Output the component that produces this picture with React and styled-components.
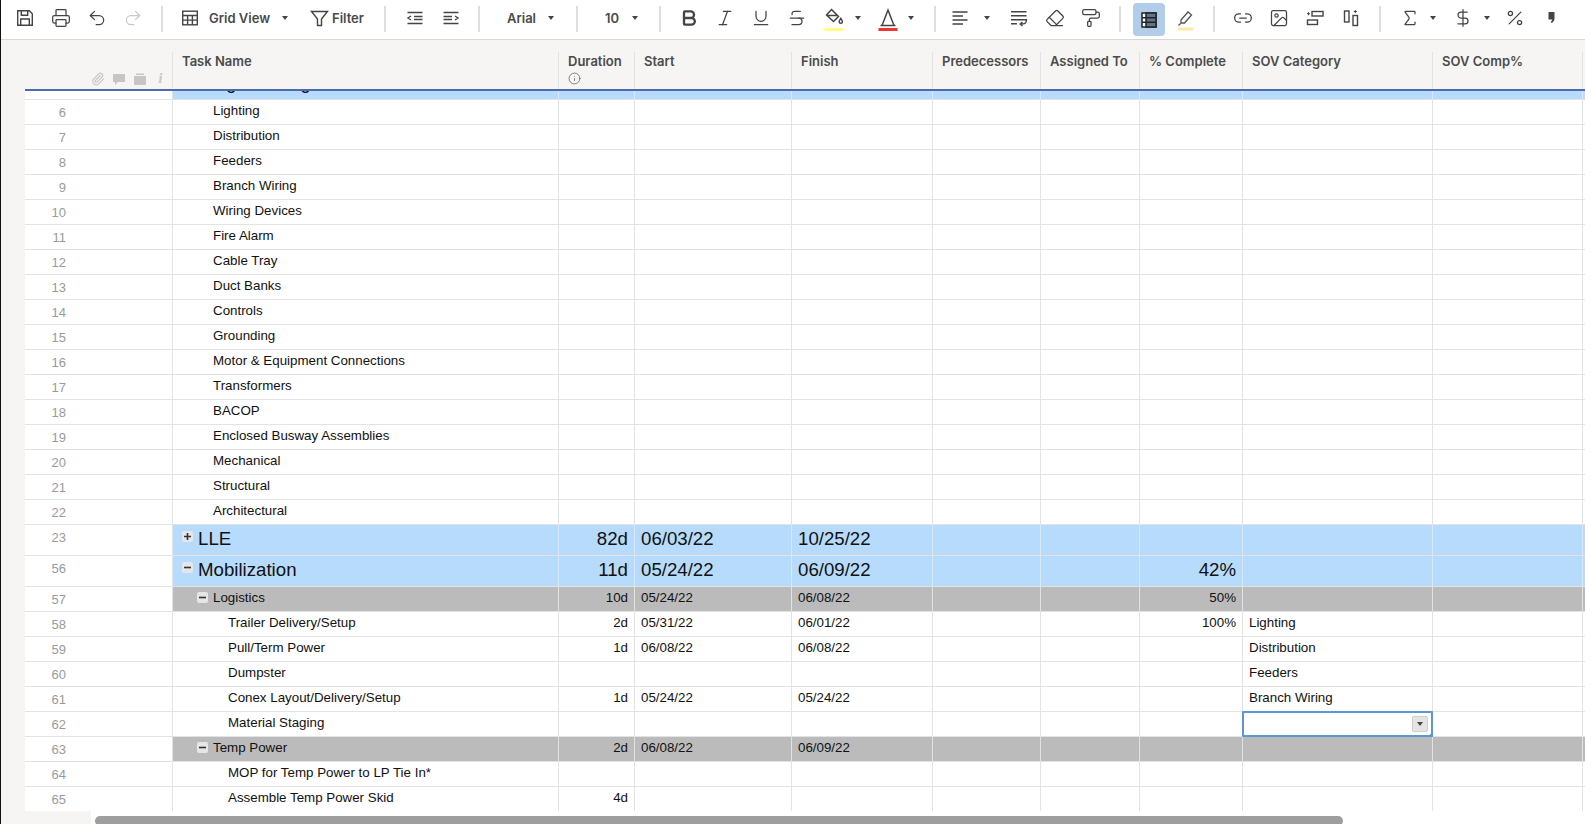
import React from 'react'
import styled, { createGlobalStyle } from 'styled-components'
import {
    Printer, Undo2, Redo2, Bold, Italic, Underline, Strikethrough, Eraser, PaintRoller,
    Link2, Image as ImageIcon, Sigma, DollarSign, Percent, Paperclip, Info
} from 'lucide-react'

const COLUMNS = '148px 386px 76px 157px 141px 108px 99px 103px 190px 150px 1fr'
const UI_FONT = '"Inter", "Liberation Sans", sans-serif'
const CELL_FONT = '"Liberation Sans", Arial, sans-serif'

const GlobalStyle = createGlobalStyle`
html, body {
    margin: 0;
    height: 100%;
    overflow: hidden;
    background: #fff;
}
`

const Page = styled.div`
width: 1585px;
height: 824px;
box-sizing: border-box;
border-left: 1px solid #111;
display: flex;
flex-direction: column;
overflow: hidden;
font-family: ${CELL_FONT};
`

const Toolbar = styled.div`
flex: none;
height: 40px;
box-sizing: border-box;
border-bottom: 1px solid #d8d8d8;
padding: 0 0 3px 6px;
display: flex;
align-items: center;
color: #444;
background: #fff;
overflow: hidden;
`

const ToolButton = styled.div`
flex: none;
width: ${p => p.$w || 36}px;
height: 33px;
margin-right: ${p => p.$r || 0}px;
display: flex;
align-items: center;
justify-content: center;
color: ${p => p.$muted ? '#c9c9c9' : '#444'};
svg { display: block; }
`

const ActiveButton = styled(ToolButton)`
background: #b2cde9;
border-radius: 4px;
margin-top: 3px;
`

const Separator = styled.div`
flex: none;
width: 2px;
height: 26px;
background: #dedede;
margin: 2px ${p => p.$r ?? 10}px 0 ${p => p.$l ?? 10}px;
`

const ToolLabel = styled.div`
flex: none;
width: ${p => p.$w}px;
padding-left: ${p => p.$pl || 0}px;
box-sizing: border-box;
font: 600 13px ${UI_FONT};
color: #4a4a4a;
white-space: nowrap;
`

const Caret = styled.div`
flex: none;
width: ${p => p.$w}px;
margin-right: ${p => p.$r || 0}px;
display: flex;
justify-content: center;
&::after {
    content: '';
    border-left: 3.5px solid transparent;
    border-right: 3.5px solid transparent;
    border-top: 4px solid #444;
}
`

const FilterButton = styled.div`
flex: none;
width: 74px;
box-sizing: border-box;
padding-left: 10px;
display: flex;
align-items: center;
gap: 2px;
`

const Sheet = styled.div`
flex: 1;
min-height: 0;
display: flex;
flex-direction: column;
background: #f6f5f3;
padding-left: 24px;
`

const HeaderRow = styled.div`
flex: none;
height: 51px;
box-sizing: border-box;
padding-top: 12px;
border-bottom: 2px solid #4d6cab;
display: grid;
grid-template-columns: ${COLUMNS};
`

const HeaderCell = styled.div`
border-right: 1px solid #e2e2e2;
padding: 0 0 0 9px;
font: 600 13px/18px ${UI_FONT};
color: #4b4b4b;
white-space: nowrap;
overflow: hidden;
svg { display: block; margin-top: 2px; color: #666; }
`

const GutterHead = styled.div`
border-right: 1px solid #e2e2e2;
padding: 18px 5px 0 0;
display: flex;
justify-content: flex-end;
align-items: center;
gap: 7px;
height: 18px;
color: #c6c6c6;
`

const InfoMark = styled.span`
font: italic 700 14px "Liberation Serif", serif;
color: #c6c6c6;
width: 13px;
text-align: center;
`

const Body = styled.div`
height: 720px;
flex: none;
overflow: hidden;
background: #fff;
`

const ROW_BG = { section: '#b7dbfd', group: '#bbbbbb', leaf: '#fff' }

const Row = styled.div`
display: grid;
grid-template-columns: ${COLUMNS};
height: ${p => p.$kind === 'section' ? 31 : 25}px;
margin-top: ${p => p.$clip ? -22 : 0}px;
box-sizing: border-box;
`

const NumberCell = styled.div`
background: #fff;
border-right: 1px solid #e3e3e3;
border-bottom: 1px solid #e3e3e3;
box-sizing: border-box;
padding: 5px 106px 0 0;
text-align: right;
font-size: 13px;
line-height: 16px;
color: #9a9a9a;
`

const Cell = styled.div`
position: relative;
box-sizing: border-box;
background: ${p => ROW_BG[p.$kind]};
border-right: 1px solid ${p => p.$kind === 'section' ? '#d9e8f6' : p.$kind === 'group' ? '#e2e2e2' : '#e3e3e3'};
border-bottom: 1px solid #e3e3e3;
padding: 0 6px;
text-align: ${p => p.$right ? 'right' : 'left'};
font-size: ${p => p.$kind === 'section' ? '18.67px' : '13.33px'};
line-height: ${p => p.$kind === 'section' ? '27px' : '21px'};
color: #111;
white-space: nowrap;
`

const TaskCell = styled(Cell)`
display: flex;
padding-left: ${p => p.$indent}px;
`

const Expander = styled.span`
flex: none;
width: 11px;
height: 11px;
margin: ${p => p.$big ? '6px' : '5px'} 5px 0 0;
border-radius: 2px;
background: #e6e6e6;
display: flex;
align-items: center;
justify-content: center;
svg { display: block; }
`

const Selection = styled.div`
position: absolute;
inset: -1px -1px -1px -1px;
border: 2px solid #5b96d6;
border-radius: 1px;
box-sizing: border-box;
display: flex;
align-items: center;
justify-content: flex-end;
padding-right: 3px;
&::after {
    content: '';
    position: absolute;
    right: -3px;
    bottom: -3px;
    width: 4px;
    height: 4px;
    background: #5b96d6;
}
`

const DropButton = styled.div`
width: 16px;
height: 16px;
box-sizing: border-box;
border: 1px solid #cfcfcf;
border-radius: 2px;
background: #e4e4e4;
display: flex;
align-items: center;
justify-content: center;
&::after {
    content: '';
    border-left: 3.5px solid transparent;
    border-right: 3.5px solid transparent;
    border-top: 4px solid #444;
}
`

const Footer = styled.div`
flex: 1;
min-height: 0;
display: flex;
background: #fff;
margin-left: -24px;
`

const FooterBlank = styled.div`
flex: none;
width: 90px;
background: #f6f5f3;
`

const ScrollTrack = styled.div`
flex: 1;
padding: 5px 0 0 4px;
`

const ScrollThumb = styled.div`
width: 1248px;
height: 10px;
background: #9e9e9e;
border-radius: 5px;
`

const Glyph = ({ children, size = 20, vb = 20 }) => (
    <svg width={size} height={size} viewBox={`0 0 ${vb} ${vb}`} fill='none' stroke='currentColor' strokeWidth='1.4'>
        {children}
    </svg>
)

const lucide = { size: 20, strokeWidth: 1.5 }

const SaveIcon = () => (
    <Glyph>
        <path d='M2.700 2.700h11.600l3 3v11.600H2.700z' />
        <path d='M6.300 2.700v4.600h6.400V2.700M5.700 17.300v-6.300h8.600v6.300' />
    </Glyph>
)

const GridViewIcon = () => (
    <Glyph>
        <rect x='2.700' y='3.200' width='14.600' height='13.600' />
        <path d='M2.700 7.500h14.600M2.700 12.100h14.600M7.600 7.500v9.300M12.400 7.500v9.300' />
    </Glyph>
)

const FunnelIcon = () => (
    <Glyph>
        <path d='M1.500 3.500h16l-6 7.500v6.500h-4V11z' />
    </Glyph>
)

const OutdentIcon = () => (
    <Glyph>
        <path d='M2.500 4.500h15M9 8.500h8.500M9 11.500h8.500M2.500 15.500h15M6 8l-3 2 3 2' />
    </Glyph>
)

const IndentIcon = () => (
    <Glyph>
        <path d='M2.500 4.500h15M2.500 8.500h8.500M2.500 11.500h8.500M2.500 15.500h15M14 8l3 2-3 2' />
    </Glyph>
)

const AlignIcon = () => (
    <Glyph>
        <path d='M2.500 4h15M2.500 8h10.500M2.500 12h15M2.500 16h10.500' />
    </Glyph>
)

const WrapIcon = () => (
    <Glyph>
        <path d='M2 3.700h15.500M2 7.700h15.500M2 11.700h15.500c0 4-2 4.300-6 4.300M13.500 14l-2.300 2 2.300 2M2 15.700h6' />
    </Glyph>
)

const FillIcon = () => (
    <svg width='20' height='26' viewBox='0 0 20 26' fill='none' stroke='currentColor' strokeWidth='1.500'>
        <path d='M7.500 4.500l7 7-5 5-7-6.500zM3 10.500h11' />
        <path d='M16.800 13.500c1 1.600 1.600 2.400 1.600 3.200a1.600 1.600 0 0 1-3.200 0c0-.8.600-1.600 1.600-3.200z' />
        <rect x='0.500' y='23' width='19' height='3' fill='#ffff80' stroke='none' />
    </svg>
)

const TextColorIcon = () => (
    <svg width='20' height='26' viewBox='0 0 20 26' fill='none' stroke='currentColor' strokeWidth='1.500'>
        <path d='M4 20.500L10 5l6 15.500M2.500 20.500h15' />
        <rect x='0.500' y='23' width='19' height='3' fill='#ee3333' stroke='none' />
    </svg>
)

const CardsIcon = () => (
    <svg width='16' height='16' viewBox='0 0 16 16' fill='#5e7488' stroke='#222' strokeWidth='1.500'>
        <rect x='1' y='1' width='14' height='14' fill='#fff' />
        <rect x='5' y='1' width='10' height='14' />
        <path d='M1 5.700h14M1 10.300h14' />
    </svg>
)

const HighlightIcon = () => (
    <svg width='20' height='26' viewBox='0 0 20 26' fill='none' stroke='#555' strokeWidth='1.300'>
        <path d='M6 15l7-8 3.500 3-7 8H6zM5.500 18.500l-2 2' />
        <rect x='3' y='22.500' width='15' height='3' fill='#fbe9a8' stroke='none' />
    </svg>
)

const RowsIcon = () => (
    <Glyph>
        <rect x='7' y='3.500' width='11' height='4.500' />
        <rect x='2.500' y='12' width='10' height='4.500' />
        <path d='M2 5.700h3M3.500 4.200v3' strokeWidth='1' />
    </Glyph>
)

const ColumnsIcon = () => (
    <Glyph>
        <rect x='3.500' y='3' width='4.500' height='11' />
        <rect x='12' y='7.500' width='4.500' height='10' />
        <path d='M12.800 3.500h3M14.300 2v3' strokeWidth='1' />
    </Glyph>
)

const CommaIcon = () => (
    <svg width='10' height='16' viewBox='0 0 10 16'>
        <path d='M1.500 2h6v6c0 2.500-1 4-3 5l-.8-1.200c1-.6 1.400-1.400 1.500-2.300H1.500z' fill='#444' />
    </svg>
)

const CommentIcon = () => (
    <svg width='14' height='14' viewBox='0 0 14 14' fill='currentColor'>
        <path d='M1 2h12v8H6l-3 3v-3H1z' />
    </svg>
)

const BriefcaseIcon = () => (
    <svg width='14' height='14' viewBox='0 0 14 14' fill='currentColor'>
        <rect x='1' y='4' width='12' height='9' rx='1' />
        <rect x='3' y='1.500' width='8' height='1.500' />
    </svg>
)

const ExpandMark = ({ open }) => (
    <svg width='7' height='7' viewBox='0 0 7 7' stroke='#333' strokeWidth='1.600'>
        <path d={open ? 'M0 3.500h7' : 'M0 3.500h7M3.500 0v7'} />
    </svg>
)

const HEADERS = ['Task Name', 'Duration', 'Start', 'Finish', 'Predecessors', 'Assigned To', '% Complete', 'SOV Category', 'SOV Comp%', '']

const LEAVES = [
    [6, 'Lighting'], [7, 'Distribution'], [8, 'Feeders'], [9, 'Branch Wiring'], [10, 'Wiring Devices'],
    [11, 'Fire Alarm'], [12, 'Cable Tray'], [13, 'Duct Banks'], [14, 'Controls'], [15, 'Grounding'],
    [16, 'Motor & Equipment Connections'], [17, 'Transformers'], [18, 'BACOP'],
    [19, 'Enclosed Busway Assemblies'], [20, 'Mechanical'], [21, 'Structural'], [22, 'Architectural']
]

const ROWS = [
    { num: 5, kind: 'section', name: 'Stage Testing', clip: true, open: null },
    ...LEAVES.map(([num, name]) => ({ num, kind: 'leaf', name, indent: 40 })),
    { num: 23, kind: 'section', name: 'LLE', open: false, duration: '82d', start: '06/03/22', finish: '10/25/22' },
    { num: 56, kind: 'section', name: 'Mobilization', open: true, duration: '11d', start: '05/24/22', finish: '06/09/22', complete: '42%' },
    { num: 57, kind: 'group', name: 'Logistics', open: true, duration: '10d', start: '05/24/22', finish: '06/08/22', complete: '50%' },
    { num: 58, kind: 'leaf', name: 'Trailer Delivery/Setup', indent: 55, duration: '2d', start: '05/31/22', finish: '06/01/22', complete: '100%', sov: 'Lighting' },
    { num: 59, kind: 'leaf', name: 'Pull/Term Power', indent: 55, duration: '1d', start: '06/08/22', finish: '06/08/22', sov: 'Distribution' },
    { num: 60, kind: 'leaf', name: 'Dumpster', indent: 55, sov: 'Feeders' },
    { num: 61, kind: 'leaf', name: 'Conex Layout/Delivery/Setup', indent: 55, duration: '1d', start: '05/24/22', finish: '05/24/22', sov: 'Branch Wiring' },
    { num: 62, kind: 'leaf', name: 'Material Staging', indent: 55, selected: true },
    { num: 63, kind: 'group', name: 'Temp Power', open: true, duration: '2d', start: '06/08/22', finish: '06/09/22' },
    { num: 64, kind: 'leaf', name: 'MOP for Temp Power to LP Tie In*', indent: 55 },
    { num: 65, kind: 'leaf', name: 'Assemble Temp Power Skid', indent: 55, duration: '4d' }
]

const SheetRow = ({ row }) => {
    const { kind, open } = row
    const hasToggle = typeof open === 'boolean'
    const indent = row.indent ?? (kind === 'group' ? 24 : hasToggle ? 9 : 25)
    return (
        <Row $kind={kind} $clip={row.clip}>
            <NumberCell>{row.clip ? '' : row.num}</NumberCell>
            <TaskCell $kind={kind} $indent={indent}>
                {hasToggle && <Expander $big={kind === 'section'}><ExpandMark open={open} /></Expander>}
                {row.name}
            </TaskCell>
            <Cell $kind={kind} $right>{row.duration}</Cell>
            <Cell $kind={kind}>{row.start}</Cell>
            <Cell $kind={kind}>{row.finish}</Cell>
            <Cell $kind={kind} />
            <Cell $kind={kind} />
            <Cell $kind={kind} $right>{row.complete}</Cell>
            <Cell $kind={kind}>
                {row.sov}
                {row.selected && <Selection><DropButton /></Selection>}
            </Cell>
            <Cell $kind={kind} />
            <Cell $kind={kind} />
        </Row>
    )
}

const App = () => (
    <Page>
        <GlobalStyle />
        <Toolbar>
            <ToolButton><SaveIcon /></ToolButton>
            <ToolButton><Printer {...lucide} /></ToolButton>
            <ToolButton><Undo2 {...lucide} /></ToolButton>
            <ToolButton $muted><Redo2 {...lucide} /></ToolButton>
            <Separator />
            <ToolButton $w={34}><GridViewIcon /></ToolButton>
            <ToolLabel $w={63} $pl={2}>Grid View</ToolLabel>
            <Caret $w={30} />
            <FilterButton>
                <FunnelIcon />
                <ToolLabel $w={36}>Filter</ToolLabel>
            </FilterButton>
            <Separator />
            <ToolButton $w={37}><OutdentIcon /></ToolButton>
            <ToolButton $w={35}><IndentIcon /></ToolButton>
            <Separator />
            <ToolLabel $w={50} $pl={17}>Arial</ToolLabel>
            <Caret $w={22} />
            <Separator $l={14} />
            <ToolLabel $w={42} $pl={17}>10</ToolLabel>
            <Caret $w={10} />
            <Separator $l={19} $r={9} />
            <ToolButton $w={37}><Bold size={20} strokeWidth={2.8} /></ToolButton>
            <ToolButton><Italic {...lucide} /></ToolButton>
            <ToolButton $w={35}><Underline {...lucide} /></ToolButton>
            <ToolButton $w={37}><Strikethrough {...lucide} /></ToolButton>
            <ToolButton $w={38}><FillIcon /></ToolButton>
            <Caret $w={10} $r={7} />
            <ToolButton $w={35}><TextColorIcon /></ToolButton>
            <Caret $w={12} />
            <Separator $l={17} $r={6} />
            <ToolButton><AlignIcon /></ToolButton>
            <Caret $w={17} $r={6} />
            <ToolButton><WrapIcon /></ToolButton>
            <ToolButton><Eraser {...lucide} /></ToolButton>
            <ToolButton><PaintRoller {...lucide} /></ToolButton>
            <Separator $r={12} />
            <ActiveButton $w={32} $r={2}><CardsIcon /></ActiveButton>
            <ToolButton><HighlightIcon /></ToolButton>
            <Separator />
            <ToolButton><Link2 {...lucide} /></ToolButton>
            <ToolButton><ImageIcon {...lucide} /></ToolButton>
            <ToolButton $w={35}><RowsIcon /></ToolButton>
            <ToolButton $w={37}><ColumnsIcon /></ToolButton>
            <Separator $r={11} />
            <ToolButton><Sigma {...lucide} /></ToolButton>
            <Caret $w={10} $r={7} />
            <ToolButton><DollarSign {...lucide} /></ToolButton>
            <Caret $w={12} $r={3} />
            <ToolButton $w={38}><Percent {...lucide} /></ToolButton>
            <ToolButton><CommaIcon /></ToolButton>
        </Toolbar>
        <Sheet>
            <HeaderRow>
                <GutterHead>
                    <Paperclip size={14} strokeWidth={2} />
                    <CommentIcon />
                    <BriefcaseIcon />
                    <InfoMark>i</InfoMark>
                </GutterHead>
                {HEADERS.map((title, i) => (
                    <HeaderCell key={i}>
                        {title}
                        {title === 'Duration' && <Info size={13} strokeWidth={1.5} />}
                    </HeaderCell>
                ))}
            </HeaderRow>
            <Body>
                {ROWS.map(row => <SheetRow key={row.num} row={row} />)}
            </Body>
            <Footer>
                <FooterBlank />
                <ScrollTrack><ScrollThumb /></ScrollTrack>
            </Footer>
        </Sheet>
    </Page>
)

export default App
